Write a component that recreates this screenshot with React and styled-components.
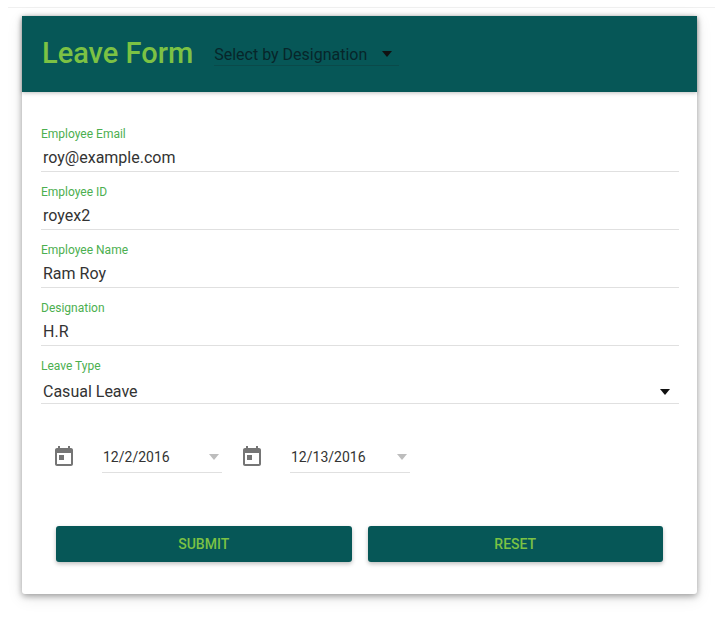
import React from "react";
import styled, { createGlobalStyle } from "styled-components";

const GlobalStyle = createGlobalStyle`
  html, body {
    margin: 0;
    background: #fff;
    font-family: Roboto, "Liberation Sans", sans-serif;
  }
`;

const Page = styled.div`
  width: 722px;
  height: 618px;
  box-sizing: border-box;
  padding-top: 7px;
  overflow: hidden;
`;
const TopRule = styled.div`
  height: 1px;
  margin: 0 7px 8px 8px;
  background: #f0f0f0;
`;
const Card = styled.div`
  width: 675px;
  height: 578px;
  margin-left: 22px;
  background: #fff;
  border-radius: 0 0 3px 3px;
  box-shadow: 0 2px 6px rgba(0, 0, 0, 0.35), 0 4px 16px rgba(0, 0, 0, 0.1);
`;
const Header = styled.div`
  height: 76px;
  box-sizing: border-box;
  display: flex;
  align-items: center;
  padding: 0 0 2px 20px;
  background: #065757;
  box-shadow: 0 1px 4px rgba(0, 0, 0, 0.25);
`;
const Title = styled.h1`
  margin: 0 21px 0 0;
  font-size: 29px;
  font-weight: 500;
  color: #7cc244;
`;
const DesignationSelect = styled.div`
  width: 185px;
  height: 23px;
  margin-top: 3px;
  box-sizing: border-box;
  display: flex;
  align-items: center;
  justify-content: space-between;
  padding: 0 7px 0 0;
  font-size: 16px;
  color: #06262a;
  border-bottom: 1px solid #0a4a4a;
`;
const Arrow = styled.span`
  width: 0;
  height: 0;
  border-left: 5px solid transparent;
  border-right: 5px solid transparent;
  border-top: 6px solid ${(p) => p.$color || "#111"};
`;
const Body = styled.div`
  padding: 34px 18px 0 19px;
`;
const Field = styled.div`
  height: 58px;
  box-sizing: border-box;
  padding-top: 1px;
`;
const FieldLabel = styled.div`
  font-size: 12px;
  line-height: 14px;
  color: #4caf50;
`;
const FieldValue = styled.div`
  height: 31px;
  box-sizing: border-box;
  display: flex;
  align-items: center;
  justify-content: space-between;
  padding: ${(p) => (p.$select ? "7px" : "3px")} 9px 0 2px;
  font-size: 16px;
  color: #333;
  border-bottom: 1px solid #e0e0e0;
`;
const DateRow = styled.div`
  display: flex;
  align-items: center;
  margin: 25px 0 0 11px;
`;
const DateIcon = styled.svg`
  width: 24px;
  height: 24px;
  margin-right: 26px;
  fill: #757575;
`;
const DateField = styled.div`
  width: 120px;
  height: 32px;
  margin-right: 18px;
  box-sizing: border-box;
  display: flex;
  align-items: center;
  justify-content: space-between;
  padding: 0 3px 0 1px;
  font-size: 14px;
  color: #333;
  border-bottom: 1px solid #e0e0e0;
`;
const Buttons = styled.div`
  display: flex;
  gap: 16px;
  margin: 53px 16px 0 15px;
`;
const Button = styled.button`
  flex: 1;
  height: 36px;
  padding: 0;
  border: 0;
  border-radius: 3px;
  background: #065757;
  color: #7cc244;
  font-family: inherit;
  font-size: 14px;
  font-weight: 500;
  box-shadow: 0 2px 4px rgba(0, 0, 0, 0.25);
`;

const CalendarIcon = () => (
  <DateIcon viewBox="0 0 24 24">
    <path d="M19 3h-1V1h-2v2H8V1H6v2H5c-1.11 0-1.99.9-1.99 2L3 19c0 1.1.89 2 2 2h14c1.1 0 2-.9 2-2V5c0-1.1-.9-2-2-2zm0 16H5V8h14v11zM7 10h5v5H7z" />
  </DateIcon>
);

const fields = [
  { label: "Employee Email", value: "roy@example.com" },
  { label: "Employee ID", value: "royex2" },
  { label: "Employee Name", value: "Ram Roy" },
  { label: "Designation", value: "H.R" },
];

export default function App() {
  return (
    <Page>
      <GlobalStyle />
      <TopRule />
      <Card>
        <Header>
          <Title>Leave Form</Title>
          <DesignationSelect>
            Select by Designation
            <Arrow />
          </DesignationSelect>
        </Header>
        <Body>
          {fields.map((f) => (
            <Field key={f.label}>
              <FieldLabel>{f.label}</FieldLabel>
              <FieldValue>{f.value}</FieldValue>
            </Field>
          ))}
          <Field>
            <FieldLabel>Leave Type</FieldLabel>
            <FieldValue $select>
              Casual Leave
              <Arrow />
            </FieldValue>
          </Field>
          <DateRow>
            <CalendarIcon />
            <DateField>
              12/2/2016
              <Arrow $color="#bdbdbd" />
            </DateField>
            <CalendarIcon />
            <DateField>
              12/13/2016
              <Arrow $color="#bdbdbd" />
            </DateField>
          </DateRow>
          <Buttons>
            <Button>SUBMIT</Button>
            <Button>RESET</Button>
          </Buttons>
        </Body>
      </Card>
    </Page>
  );
}
